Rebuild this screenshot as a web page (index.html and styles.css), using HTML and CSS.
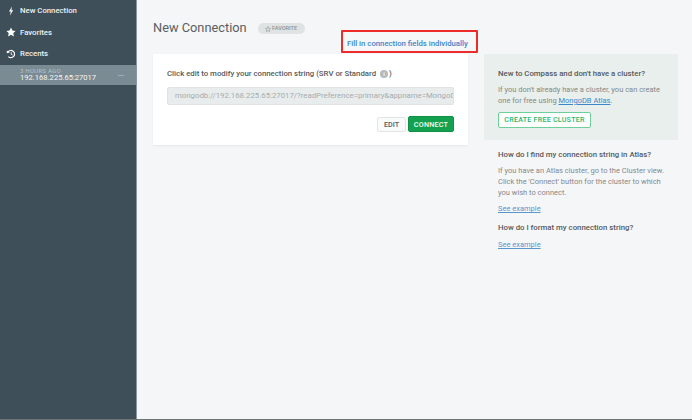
FILE: index.html
```html
<!DOCTYPE html>
<html lang="en">
<head>
<meta charset="utf-8">
<title>New Connection</title>
<link rel="stylesheet" href="styles.css">
</head>
<body>
<div class="app">
  <aside class="sidebar">
    <div class="nav-row">
      <svg class="nav-icon" viewBox="0 0 10 10"><path d="M6 .5 3 5.4H4.8L3.9 9.6 7.2 4.2H5.4Z" fill="#fff"/></svg>
      <span>New Connection</span>
    </div>
    <div class="nav-row">
      <svg class="nav-icon" viewBox="0 0 10 10"><path d="M5 .6 6.4 3.5 9.6 3.9 7.3 6.1 7.9 9.4 5 7.8 2.1 9.4 2.7 6.1.4 3.9 3.6 3.5Z" fill="#fff"/></svg>
      <span>Favorites</span>
    </div>
    <div class="nav-row">
      <svg class="nav-icon" viewBox="0 0 10 10"><path d="M2 3A3.6 3.6 0 1 1 2.4 7.6" fill="none" stroke="#fff" stroke-width="1.2"/><path d="M.8 1.4 3.8 3.6.8 4.2Z" fill="#fff"/><path d="M5.2 3.2V5.3L6.6 6" fill="none" stroke="#fff" stroke-width=".9"/></svg>
      <span>Recents</span>
    </div>
    <div class="recent">
      <div class="recent-text">
        <div class="recent-time">3 HOURS AGO</div>
        <div class="recent-host">192.168.225.65:27017</div>
      </div>
      <div class="recent-more">...</div>
    </div>
  </aside>
  <main class="main">
    <header class="head">
      <h1 class="title">New Connection</h1>
      <span class="fav"><svg class="fav-star" viewBox="0 0 10 10"><path d="M5 .8 6.2 3.7 9.4 4 7 6.1 7.7 9.2 5 7.6 2.3 9.2 3 6.1.6 4 3.8 3.7Z" fill="none" stroke="#8b9596" stroke-width="1"/></svg>FAVORITE</span>
      <div class="callout"><a class="callout-link">Fill in connection fields individually</a></div>
    </header>
    <div class="columns">
      <section class="card">
        <p class="card-label">Click edit to modify your connection string (SRV or Standard <span class="info">i</span>)</p>
        <div class="uri">mongodb://192.168.225.65:27017/?readPreference=primary&amp;appname=MongoDB</div>
        <div class="actions">
          <button class="btn btn-edit">EDIT</button>
          <button class="btn btn-connect">CONNECT</button>
        </div>
      </section>
      <aside class="help">
        <div class="promo">
          <h2 class="help-h">New to Compass and don't have a cluster?</h2>
          <p class="help-p">If you don't already have a cluster, you can create one for free using <a class="help-a dark">MongoDB Atlas</a>.</p>
          <button class="btn-cluster">CREATE FREE CLUSTER</button>
        </div>
        <div class="faq">
          <h2 class="help-h">How do I find my connection string in Atlas?</h2>
          <p class="help-p">If you have an Atlas cluster, go to the Cluster view. Click the 'Connect' button for the cluster to which you wish to connect.</p>
          <a class="help-a block">See example</a>
          <h2 class="help-h second">How do I format my connection string?</h2>
          <a class="help-a block">See example</a>
        </div>
      </aside>
    </div>
  </main>
</div>
</body>
</html>
```
FILE: styles.css
```css
* { box-sizing: border-box; }
html, body { margin: 0; height: 100%; overflow: hidden; }
body { font-family: Roboto, "Liberation Sans", Arial, sans-serif; background: #6d7472; color: #494c4f; }
.app { display: flex; height: 419px; }
.sidebar { width: 137px; flex: none; background: #3e4f59; border-right: 1px solid #8a979e; color: #fff; font-size: 7.75px; }
.nav-row { height: 21.5px; display: flex; align-items: center; padding-left: 6px; gap: 4px; font-weight: 500; color: #eef1f2; }
.nav-icon { width: 10px; height: 10px; flex: none; }
.recent { height: 20px; background: #7b8b93; display: flex; align-items: center; justify-content: space-between; padding: 0 12px 0 20px; }
.recent-time { font-size: 6px; line-height: 7px; color: #b8c2c6; letter-spacing: .25px; }
.recent-host { font-size: 7.6px; line-height: 8px; color: #f4f6f7; }
.recent-more { font-size: 8px; line-height: 8px; color: #e4e8ea; margin-bottom: 1px; }
.main { flex: 1; padding: 0 14px 0 16px; min-width: 0; position: relative; background: #f5f6f8; }
.head { height: 54px; display: flex; align-items: flex-start; padding-top: 20px; gap: 11px; }
.title { margin: 0; font-size: 12.8px; line-height: 16px; font-weight: 400; color: #5a5f62; }
.fav { margin-top: 3px; height: 11px; width: 47px; justify-content: center; border-radius: 6px; background: #dfe3e4; color: #8b9596; font-size: 5.6px; line-height: 11px; font-weight: 500; display: flex; align-items: center; gap: 1px; }
.fav-star { width: 6px; height: 6px; }
.callout { position: absolute; left: 204px; top: 30px; width: 137px; height: 23px; border: 2px solid #ee2b2b; border-radius: 1px; padding-left: 4px; display: flex; align-items: center; }
.callout-link { font-size: 7.75px; font-weight: 500; color: #3f86c8; white-space: nowrap; margin-top: 3px; }
.columns { display: flex; gap: 16px; align-items: flex-start; }
.card { width: 315px; height: 91px; flex: none; background: #fff; padding: 14px 14px 0; box-shadow: 0 1px 2px rgba(0,0,0,.06); }
.card-label { margin: 0; font-size: 7.8px; line-height: 12px; font-weight: 500; color: #555a5d; display: flex; align-items: center; white-space: pre; }
.info { width: 8px; height: 8px; margin: 0 1px 0 2px; border-radius: 50%; background: #b4bbbd; color: #fff; font-size: 6px; line-height: 8px; text-align: center; }
.uri { margin-top: 7px; height: 18px; background: #e8ecec; border: 1px solid #dfe3e3; border-radius: 2px; color: #a5acae; font-size: 7.8px; line-height: 16px; padding-left: 7px; padding-right: 2px; overflow: hidden; white-space: nowrap; }
.actions { margin-top: 11px; display: flex; justify-content: flex-end; align-items: center; gap: 2px; }
.btn { border-radius: 2px; font: 500 7.2px/13px Roboto, "Liberation Sans", Arial, sans-serif; padding: 0; }
.btn-edit { width: 29px; height: 15px; background: #f9fafa; border: 1px solid #e2e5e6; color: #555a5d; }
.btn-connect { width: 46px; height: 16px; background: #13a150; border: 1px solid #0f9247; color: #f1fbf5; letter-spacing: .2px; }
.help { width: 194px; flex: none; }
.promo { height: 86px; background: #e8efec; padding: 14px 10px 0 14px; }
.help-h { margin: 0; font-size: 7.8px; line-height: 12px; font-weight: 500; color: #55595c; white-space: nowrap; }
.help-p { margin: 5px 0 0; font-size: 7.5px; line-height: 10.8px; color: #85898b; }
.help-a { color: #5b96cc; text-decoration: underline; font-size: 7.5px; line-height: 10px; }
.help-a.dark { color: #3f86c8; }
.help-a.block { display: block; margin-top: 6px; }
.btn-cluster { display: block; margin-top: 5px; width: 93px; height: 16px; padding: 0; background: #fff; border: 1px solid #6fcf9b; border-radius: 2px; color: #2fb56b; font: 500 7.2px/14px Roboto, "Liberation Sans", Arial, sans-serif; letter-spacing: .2px; }
.faq { padding: 9px 10px 0 14px; }
.second { margin-top: 8px; }
```
